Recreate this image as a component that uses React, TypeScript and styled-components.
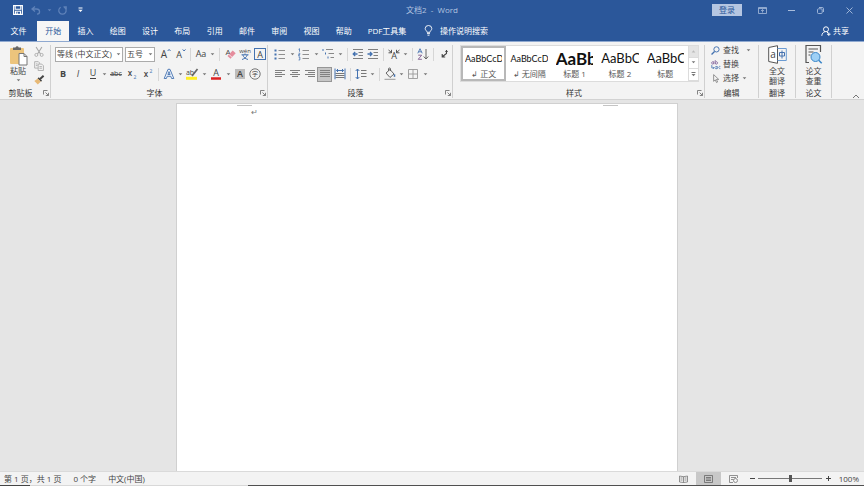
import React from "react";
import styled, { createGlobalStyle, css } from "styled-components";

const BLUE = "#2b579a";
const INK = "#444444";
const ACCENT = "#4472b0";

const GlobalStyle = createGlobalStyle`
  *, *::before, *::after { box-sizing: border-box; }
  html, body, #root { height: 100%; }
  body {
    margin: 0;
    overflow: hidden;
    font: 8px/10px "Open Sans", "Noto Sans CJK SC", sans-serif;
    color: ${INK};
  }
  button, select, input { font: inherit; color: inherit; margin: 0; padding: 0; border: 0; background: none; }
  svg { display: block; flex: none; overflow: visible; }
`;

const Shell = styled.div`
  display: flex;
  flex-direction: column;
  height: 100vh;
  background: #e5e5e5;
`;

/* Title bar */
const TitleBar = styled.header`
  display: grid;
  grid-template-columns: 1fr auto 1fr;
  align-items: center;
  height: 20px;
  background: ${BLUE};
  color: #b4c5e0;
`;
const QuickAccess = styled.div`
  display: flex;
  align-items: center;
  padding-left: 9px;
`;
const QuickButton = styled.button<{ $dim?: boolean; $narrow?: boolean }>`
  display: grid;
  place-items: center;
  width: ${(p) => (p.$narrow ? 8 : 18)}px;
  height: 16px;
  color: ${(p) => (p.$dim ? "#5f82b9" : "#ffffff")};
`;
const QuickGap = styled.span`
  width: 5px;
`;
const DocTitle = styled.h1`
  margin: 0;
  font-size: 8px;
  font-weight: 400;
  white-space: pre;
`;
const WindowControls = styled.div`
  display: flex;
  align-items: center;
  justify-content: flex-end;
`;
const SignIn = styled.button`
  width: 30px;
  height: 12px;
  margin-right: 6px;
  background: #b5c6e2;
  color: ${BLUE};
  line-height: 12px;
`;
const WindowButton = styled.button`
  display: grid;
  place-items: center;
  width: 29px;
  height: 20px;
  color: #a9bddc;
`;

/* Tabs */
const TabBar = styled.nav`
  display: flex;
  height: 21px;
  background: ${BLUE};
  color: #ffffff;
`;
const FileTab = styled.button`
  width: 37px;
`;
const TabList = styled.div`
  display: grid;
  grid-template-columns: repeat(10, 1fr);
  flex: 0 0 323px;
`;
const Tab = styled.button<{ $active?: boolean }>`
  white-space: nowrap;
  ${(p) =>
    p.$active &&
    css`
      background: #f6f6f6;
      color: ${BLUE};
      margin-top: 1px;
    `}
`;
const WideTab = styled(Tab)`
  width: 54px;
`;
const TellMe = styled.button`
  display: flex;
  align-items: center;
  gap: 7px;
  padding-left: 10px;
`;
const Share = styled.button`
  display: flex;
  align-items: center;
  gap: 2px;
  margin-left: auto;
  padding-right: 15px;
`;

/* Ribbon */
const RibbonBar = styled.div`
  display: flex;
  flex: none;
  height: 59px;
  padding-top: 3px;
  background: #f3f3f3;
  border-top: 1px solid #8fa9d0;
  border-bottom: 1px solid #d2d2d2;
`;
const GroupBox = styled.section<{ $width: number }>`
  display: flex;
  flex-direction: column;
  flex: 0 0 ${(p) => p.$width}px;
  min-width: 0;
  height: 53px;
  border-right: 1px solid #d0d0d0;
`;
const GroupBody = styled.div`
  display: flex;
  flex: 1;
  min-height: 0;
`;
const GroupFooter = styled.footer`
  display: flex;
  align-items: center;
  height: 10px;
  text-align: center;
  white-space: nowrap;
  color: #333333;
`;
const GroupName = styled.span`
  flex: 1;
`;
const Launcher = styled.button`
  display: grid;
  place-items: center;
  width: 9px;
  height: 9px;
  color: #777777;
`;
const Rows = styled.div<{ $inset: number }>`
  display: flex;
  flex-direction: column;
  gap: 4px;
  padding: 1px 0 0 ${(p) => p.$inset}px;
`;
const Row = styled.div`
  display: flex;
  align-items: center;
  height: 16px;
`;
const Tool = styled.button<{ $on?: boolean; $wide?: boolean }>`
  display: grid;
  place-items: center;
  width: ${(p) => (p.$wide ? 16 : 15)}px;
  height: 15px;
  white-space: nowrap;
  ${(p) =>
    p.$on &&
    css`
      background: #c6c6c6;
      border: 1px solid #969696;
    `}
`;
const CaretButton = styled.button`
  display: grid;
  place-items: center;
  width: 8px;
  height: 15px;
`;
const Divider = styled.span`
  width: 6px;
  height: 13px;
  background: linear-gradient(#d6d6d6, #d6d6d6) center / 1px 100% no-repeat;
`;
const SelectBox = styled.label<{ $width: number }>`
  display: grid;
  grid-template-columns: 1fr 8px;
  align-items: center;
  width: ${(p) => p.$width}px;
  height: 15px;
  margin-right: 2px;
  background: #ffffff;
  border: 1px solid #ababab;
  svg {
    grid-area: 1 / 2;
    justify-self: center;
    pointer-events: none;
  }
`;
const Select = styled.select`
  grid-area: 1 / 1 / 2 / 3;
  width: 100%;
  height: 13px;
  padding-left: 1px;
  appearance: none;
  white-space: nowrap;
`;

const Paste = styled.button`
  display: flex;
  flex-direction: column;
  align-items: center;
  width: 30px;
  margin-left: 3px;
  padding-bottom: 4px;
`;
const PasteLabel = styled.span`
  margin-bottom: 3px;
`;
const ClipTools = styled.div`
  display: flex;
  flex-direction: column;
  width: 12px;
`;
const ClipTool = styled.button`
  display: grid;
  place-items: center;
  height: 14px;
`;

const Gallery = styled.div`
  display: flex;
  flex: 1;
  min-width: 0;
  height: 37px;
  margin: 0 5px 0 7px;
  background: #ffffff;
  border: 1px solid #dcdcdc;
`;
const StyleCard = styled.button<{ $on?: boolean }>`
  display: flex;
  flex-direction: column;
  flex: 1 1 0;
  min-width: 0;
  padding: 0 2px;
  border: 2px solid ${(p) => (p.$on ? "#b8b8b8" : "transparent")};
`;
const Sample = styled.span<{ $size: number; $bold?: boolean }>`
  width: 100%;
  height: 21px;
  overflow: hidden;
  text-align: left;
  white-space: nowrap;
  font-family: Lato, "Open Sans", sans-serif;
  font-size: ${(p) => p.$size}px;
  font-weight: ${(p) => (p.$bold ? 700 : 400)};
  line-height: 21px;
  color: #111111;
`;
const SampleName = styled.span`
  width: 100%;
  white-space: nowrap;
  text-align: center;
  color: #555555;
`;
const GalleryScroll = styled.div`
  display: grid;
  grid-template-rows: repeat(3, 1fr);
  width: 10px;
  border-left: 1px solid #dcdcdc;
`;
const ScrollButton = styled.button<{ $off?: boolean }>`
  display: grid;
  place-items: center;
  color: ${(p) => (p.$off ? "#bbbbbb" : "#777777")};
  background: ${(p) => (p.$off ? "#e4e4e4" : "#ffffff")};
  border-bottom: 1px solid #dcdcdc;
`;
const EditList = styled.div`
  display: flex;
  flex-direction: column;
  padding-left: 6px;
  margin-top: -2px;
`;
const EditItem = styled.button`
  display: flex;
  align-items: center;
  gap: 3px;
  height: 14px;
  white-space: nowrap;
`;
const EditCaret = styled.span<{ $far?: boolean }>`
  margin-left: ${(p) => (p.$far ? 4 : 0)}px;
`;
const BigTool = styled.button`
  display: flex;
  flex: 1;
  flex-direction: column;
  align-items: center;
  gap: 2px;
  white-space: pre;
`;
const Collapse = styled.button`
  align-self: flex-end;
  margin: 0 4px 0 auto;
  color: #666666;
`;

/* Document */
const Workspace = styled.main`
  display: flex;
  flex: 1;
  min-height: 0;
  justify-content: center;
  padding: 3px 10px 0 0;
`;
const Page = styled.article`
  flex: 0 1 502px;
  padding: 0 59px 0 60px;
  background: #ffffff;
  border: 1px solid #d0d0d0;
  border-bottom: 0;
`;
const Margins = styled.div`
  display: flex;
  justify-content: space-between;
`;
const MarginMark = styled.span`
  width: 15px;
  height: 2px;
  border-bottom: 1px solid #c4c4c4;
`;
const Paragraph = styled.p`
  margin: 1px 0 0 14px;
  color: #777777;
`;

/* Status bar */
const StatusBar = styled.footer`
  display: flex;
  flex: none;
  align-items: center;
  height: 14px;
  padding: 0 5px 0 4px;
  background: #f3f3f3;
  border-top: 1px solid #dadada;
  white-space: nowrap;
`;
const BottomEdge = styled.div`
  flex: none;
  height: 1px;
  background: linear-gradient(to right, #444444 30px, #d8d8d8 30px 248px, #505050 248px);
`;
const StatusItem = styled.span`
  margin-right: 12px;
`;
const ViewButton = styled.button<{ $on?: boolean }>`
  display: grid;
  place-items: center;
  width: 25px;
  height: 13px;
  background: ${(p) => (p.$on ? "#c8c8c8" : "transparent")};
`;
const Views = styled.div`
  display: flex;
  margin-left: auto;
`;
const ZoomButton = styled.button`
  display: grid;
  place-items: center;
  width: 12px;
  height: 12px;
`;
const ZoomSlider = styled.input`
  width: 64px;
  height: 12px;
  appearance: none;
  background: linear-gradient(#777777, #777777) center / 100% 1px no-repeat;
  &::-webkit-slider-thumb {
    appearance: none;
    width: 3px;
    height: 7px;
    background: #555555;
  }
`;
const ZoomValue = styled.button`
  width: 25px;
  text-align: right;
`;

const Caret = ({ color = "#777777" }: { color?: string }) => (
  <svg width="5" height="3" viewBox="0 0 5 3" fill={color}><path d="M.7 .3h3.6L2.5 2.3z" /></svg>
);
const DropCaret = ({ label }: { label: string }) => (
  <CaretButton aria-label={label}><Caret /></CaretButton>
);

const Group = ({ name, width, launcher, children }: { name: string; width: number; launcher?: boolean; children: React.ReactNode }) => (
  <GroupBox $width={width} aria-label={name}>
    <GroupBody>{children}</GroupBody>
    <GroupFooter>
      <GroupName>{name}</GroupName>
      {launcher && (
        <Launcher aria-label={`${name}设置`}>
          <svg width="6" height="6" viewBox="0 0 6 6" fill="none" stroke="currentColor"><path d="M.5 4.5v-4h4M2.5 2.5l3 3M5.5 2.8v2.7H2.8" strokeWidth=".9" /></svg>
        </Launcher>
      )}
    </GroupFooter>
  </GroupBox>
);

const Glyph = ({ children, size = 12 }: { children: React.ReactNode; size?: number }) => (
  <svg width={size} height={size} viewBox="0 0 12 12" fill="none" stroke={INK} strokeWidth="1">{children}</svg>
);
const Letter = ({ x = 6, y = 9, size = 9, weight = 400, fill = INK, children, ...rest }: {
  x?: number; y?: number; size?: number; weight?: number; fill?: string; children: React.ReactNode; fontStyle?: string;
}) => (
  <text x={x} y={y} fontSize={size} fontWeight={weight} fill={fill} stroke="none" textAnchor="middle" {...rest}>{children}</text>
);

const AlignIcon = ({ rows }: { rows: [number, number][] }) => (
  <Glyph>{rows.map(([from, to], i) => <path key={i} d={`M${from} ${2.5 + i * 2}H${to}`} stroke="#808080" />)}</Glyph>
);
const ListIcon = ({ numbered }: { numbered?: boolean }) => (
  <Glyph>
    <path d="M4.5 2.5H11M4.5 6.5H11M4.5 10.5H11" stroke="#909090" />
    {numbered
      ? <path d="M.5 1.3l1-.6v3M.6 5.2h1.2v1.3H.6v1.3h1.4M.6 9h1.2v3H.6" stroke={ACCENT} strokeWidth=".8" />
      : <path d="M.5 2.5h2M.5 6.5h2M.5 10.5h2" stroke={ACCENT} strokeWidth="2" />}
  </Glyph>
);
const IndentIcon = ({ right }: { right?: boolean }) => (
  <Glyph>
    <path d="M1 1.5h10M6.5 4.5H11M6.5 7.5H11M1 10.5h10" stroke="#808080" />
    <path d={right ? "M.5 6h4M3 4l2 2-2 2" : "M5.5 6h-4M3.2 4l-2 2 2 2"} stroke={ACCENT} strokeWidth="1.3" />
  </Glyph>
);

const tabs = ["开始", "插入", "绘图", "设计", "布局", "引用", "邮件", "审阅", "视图", "帮助"];
const styleCards = [
  { name: "↲ 正文", text: "AaBbCcDd", size: 9, on: true },
  { name: "↲ 无间隔", text: "AaBbCcDd", size: 9 },
  { name: "标题 1", text: "AaBb", size: 17, bold: true },
  { name: "标题 2", text: "AaBbC", size: 13 },
  { name: "标题", text: "AaBbC", size: 13 },
];

const Title = () => (
  <TitleBar>
    <QuickAccess>
      <QuickButton aria-label="保存">
        <svg width="10" height="10" viewBox="0 0 10 10" fill="none" stroke="currentColor"><path d="M.6.6h8.8v8.8H.6zM2.2.6v3.6h5.6V.6M2.5 9.4V6.3h5v3.1M4.2 7.2v2" strokeWidth="1.1" /></svg>
      </QuickButton>
      <QuickButton $dim aria-label="撤消">
        <svg width="10" height="9" viewBox="0 0 10 9" fill="none" stroke="currentColor"><path d="M4 .5L1 3l3 2.6M1.3 3h4.2c4 0 4 5 .5 5.2" strokeWidth="1.3" /></svg>
      </QuickButton>
      <QuickButton $dim $narrow aria-label="撤消选项"><Caret color="currentColor" /></QuickButton>
      <QuickButton $dim aria-label="重复">
        <svg width="9" height="9" viewBox="0 0 9 9" fill="none" stroke="currentColor"><path d="M6.2 1.2A3.7 3.7 0 1 1 2.7 1.2M5.5.8h2.7v2.7" strokeWidth="1.2" /></svg>
      </QuickButton>
      <QuickGap />
      <QuickButton $narrow aria-label="自定义快速访问工具栏">
        <svg width="5" height="6" viewBox="0 0 5 6" fill="currentColor"><path d="M.5.5h4v1h-4zM.3 2.8h4.4L2.5 5z" /></svg>
      </QuickButton>
    </QuickAccess>
    <DocTitle>文档2  -  Word</DocTitle>
    <WindowControls>
      <SignIn>登录</SignIn>
      <WindowButton aria-label="功能区显示选项">
        <svg width="9" height="7" viewBox="0 0 9 7" fill="none" stroke="currentColor"><path d="M.5.5h8v6h-8zM.5 1.5h8M4.5 5.5V2.8M3 4l1.5-1.4L6 4" strokeWidth=".8" /></svg>
      </WindowButton>
      <WindowButton aria-label="最小化"><svg width="7" height="1" viewBox="0 0 7 1"><path d="M0 .5h7" stroke="currentColor" /></svg></WindowButton>
      <WindowButton aria-label="向下还原">
        <svg width="7" height="7" viewBox="0 0 7 7" fill="none" stroke="currentColor" strokeWidth=".9"><rect x=".5" y="1.8" width="4.7" height="4.7" rx="1" /><path d="M2 .5h3.2q1.3 0 1.3 1.3V5" /></svg>
      </WindowButton>
      <WindowButton aria-label="关闭"><svg width="7" height="7" viewBox="0 0 7 7" stroke="currentColor"><path d="M.5.5l6 6M6.5.5l-6 6" strokeWidth=".9" /></svg></WindowButton>
    </WindowControls>
  </TitleBar>
);

const Tabs = () => (
  <TabBar>
    <FileTab>文件</FileTab>
    <TabList>{tabs.map((name, i) => <Tab key={name} $active={i === 0}>{name}</Tab>)}</TabList>
    <WideTab>PDF工具集</WideTab>
    <TellMe>
      <svg width="9" height="11" viewBox="0 0 9 11" fill="none" stroke="currentColor"><path d="M3 7.3C3 5.8 1.2 5.3 1.2 3.6a3.3 3.1 0 0 1 6.6 0C7.8 5.3 6 5.8 6 7.3zM3 8.6h3M3.5 10.2h2" strokeWidth=".9" /></svg>
      操作说明搜索
    </TellMe>
    <Share>
      <svg width="10" height="10" viewBox="0 0 10 10" fill="none" stroke="currentColor"><circle cx="5" cy="3.3" r="2.5" /><path d="M.8 9.8c.2-2.3 1.4-3.6 3-4M6 6l1 1M6 8.2h3.5M7.8 6.5v3.4" /></svg>
      共享
    </Share>
  </TabBar>
);

const Clipboard = () => (
  <Group name="剪贴板" width={51} launcher>
    <Paste>
      <svg width="19" height="21" viewBox="0 0 19 21"><rect x="1" y="3" width="14" height="16" rx="1" fill="#ecc47c" /><path d="M4 5V2.5h2.5a1.7 1.7 0 0 1 3.2 0H12V5z" fill="#666666" /><path d="M10 8.5h5l3 3V20h-8z" fill="#ffffff" stroke="#777777" /><path d="M15 8.5v3h3" fill="none" stroke="#777777" /></svg>
      <PasteLabel>粘贴</PasteLabel>
      <Caret />
    </Paste>
    <ClipTools>
      <ClipTool aria-label="剪切"><Glyph size={10}><path d="M2.5 0l5.3 8.3M9.5 0L4.2 8.3" stroke="#a6a6a6" strokeWidth="1.3" /><circle cx="2.8" cy="9.5" r="1.8" stroke="#a6a6a6" /><circle cx="9.2" cy="9.5" r="1.8" stroke="#a6a6a6" /></Glyph></ClipTool>
      <ClipTool aria-label="复制"><Glyph size={10}><path d="M5 8.5H.8V.8h4.4l1.5 1.5v1M5 3.7h4.3l2 2v5.7H5zM6.5 6.7h3M6.5 8.7h3M2.3 3.5h2M2.3 5.5h2" stroke="#a6a6a6" /></Glyph></ClipTool>
      <ClipTool aria-label="格式刷"><Glyph size={10}><path d="M11.5.8L7.3 4.7" strokeWidth="2.4" /><path d="M5 3.5l4 4" strokeWidth="2" /><path d="M4.6 4.3L.4 7.2l4.2 4.3L8 8z" fill="#e7b976" stroke="none" /></Glyph></ClipTool>
    </ClipTools>
  </Group>
);

const FontGroup = () => (
  <Group name="字体" width={217} launcher>
    <Rows $inset={4}>
      <Row>
        <SelectBox $width={68}><Select aria-label="字体" defaultValue="等线 (中文正文)"><option>等线 (中文正文)</option></Select><Caret /></SelectBox>
        <SelectBox $width={30}><Select aria-label="字号" defaultValue="五号"><option>五号</option></Select><Caret /></SelectBox>
        <Tool aria-label="增大字号"><Glyph><Letter x={5} y={10} size={10}>A</Letter><path d="M8.7 3l1.4-1.6L11.5 3" stroke={ACCENT} /></Glyph></Tool>
        <Tool aria-label="减小字号"><Glyph><Letter x={5} y={10} size={9}>A</Letter><path d="M8.7 1.4L10.1 3l1.4-1.6" stroke={ACCENT} /></Glyph></Tool>
        <Divider />
        <Tool aria-label="更改大小写"><Glyph><Letter>Aa</Letter></Glyph></Tool>
        <DropCaret label="大小写选项" />
        <Divider />
        <Tool aria-label="清除所有格式"><Glyph><Letter x={4} y={7} size={8}>A</Letter><path d="M8.7 2.5l3 2.7-5.2 5.6-3-2.8z" fill="#e58c9c" stroke="none" /><path d="M5 6.5l3 2.7" stroke="#ffffff" strokeWidth=".7" /></Glyph></Tool>
        <Tool aria-label="拼音指南"><Glyph><Letter y={5} size={6}>wén</Letter><path d="M2.5 6.8h7M6 5.5v1.3M8.3 6.8C7.5 9.3 5.7 10.7 3 11.5M3.8 6.8c.7 2.5 2.5 4 5.2 4.7" stroke={ACCENT} /></Glyph></Tool>
        <Tool aria-label="字符边框"><Glyph><rect x=".5" y=".5" width="11" height="11" stroke={ACCENT} /><Letter y={9.5}>A</Letter></Glyph></Tool>
      </Row>
      <Row>
        <Tool aria-label="加粗"><Glyph><Letter weight={700}>B</Letter></Glyph></Tool>
        <Tool aria-label="倾斜"><Glyph><Letter fontStyle="italic">I</Letter></Glyph></Tool>
        <Tool aria-label="下划线"><Glyph><Letter y={8}>U</Letter><path d="M3 10.5h6" /></Glyph></Tool>
        <DropCaret label="下划线选项" />
        <Tool $wide aria-label="删除线"><Glyph><Letter y={8} size={7}>abc</Letter><path d="M0 6.5h12" strokeWidth=".8" /></Glyph></Tool>
        <Tool $wide aria-label="下标"><Glyph><Letter x={4} y={8} size={8} weight={600}>x</Letter><Letter x={9} y={11} size={5} fill={ACCENT}>2</Letter></Glyph></Tool>
        <Tool aria-label="上标"><Glyph><Letter x={4} y={9} size={8} weight={600}>x</Letter><Letter x={9} y={5} size={5} fill={ACCENT}>2</Letter></Glyph></Tool>
        <Divider />
        <Tool aria-label="文本效果"><Glyph><path d="M1.2 10.5L5 1.3h2l3.8 9.2H8.6L7.8 8.3H4.2l-.8 2.2zM4.9 6.5h2.2L6 3.6z" stroke={ACCENT} strokeWidth=".9" fill="#eef4fc" /></Glyph></Tool>
        <DropCaret label="文本效果选项" />
        <Tool $wide aria-label="突出显示"><Glyph><path d="M0 10.3h11" stroke="#ffee22" strokeWidth="3" /><Letter x={4} y={7} size={7}>ab</Letter><path d="M11.5 1L6 8" strokeWidth="1.7" stroke="#666666" /></Glyph></Tool>
        <DropCaret label="突出显示颜色" />
        <Tool $wide aria-label="字体颜色"><Glyph><Letter y={8} size={9}>A</Letter><path d="M1 10.5h10" stroke="#dd2222" strokeWidth="2.5" /></Glyph></Tool>
        <DropCaret label="字体颜色选项" />
        <Tool aria-label="字符底纹"><Glyph><path d="M1 1h10v10H1z" fill="#bdbdbd" stroke="none" /><Letter weight={600}>A</Letter></Glyph></Tool>
        <Tool aria-label="带圈字符"><Glyph><circle cx="6" cy="6" r="5.2" stroke="#777777" /><Letter y={8.3} size={6}>字</Letter></Glyph></Tool>
      </Row>
    </Rows>
  </Group>
);

const ParagraphGroup = () => (
  <Group name="段落" width={185} launcher>
    <Rows $inset={4}>
      <Row>
        <Tool $wide aria-label="项目符号"><ListIcon /></Tool><DropCaret label="项目符号库" />
        <Tool $wide aria-label="编号"><ListIcon numbered /></Tool><DropCaret label="编号库" />
        <Tool $wide aria-label="多级列表"><Glyph><path d="M4 1.5h7M6.5 5.5H12M8.5 9.5H12" stroke="#888888" /><path d="M1 1v2M3.5 4.5v2M6 8.5v2" stroke={ACCENT} /></Glyph></Tool><DropCaret label="多级列表库" />
        <Divider />
        <Tool aria-label="减少缩进量"><IndentIcon /></Tool>
        <Tool aria-label="增加缩进量"><IndentIcon right /></Tool>
        <Divider />
        <Tool aria-label="中文版式"><Glyph><path d="M.5 2l3 2.5M11.5 2l-3 2.5M.5 4.8h3V1.8M11.5 4.8h-3V1.8" strokeWidth=".9" /><Letter y={10.5}>A</Letter></Glyph></Tool><DropCaret label="中文版式选项" />
        <Divider />
        <Tool aria-label="排序"><Glyph><path d="M.8 5.3L3 .7l2.2 4.6M1.6 3.8h2.8" stroke={ACCENT} strokeWidth=".9" /><path d="M1.2 7.2h3.5L1.2 11.3h3.7" stroke="#805a90" strokeWidth=".9" /><path d="M9 1v10M6.7 8.5L9 11l2.3-2.5" stroke="#666666" /></Glyph></Tool>
        <Divider />
        <Tool aria-label="显示编辑标记"><Glyph><path d="M8.5 2v3.5L4 9M4.2 6v3h3" strokeWidth="1.1" /><path d="M7.3 3.5h2.4" /></Glyph></Tool>
      </Row>
      <Row>
        <Tool aria-label="左对齐"><AlignIcon rows={[[1, 11], [1, 8], [1, 11], [1, 8]]} /></Tool>
        <Tool aria-label="居中"><AlignIcon rows={[[1, 11], [3, 9], [1, 11], [3, 9]]} /></Tool>
        <Tool aria-label="右对齐"><AlignIcon rows={[[1, 11], [4, 11], [1, 11], [4, 11]]} /></Tool>
        <Tool $on aria-label="两端对齐" aria-pressed><AlignIcon rows={[[1, 11], [1, 11], [1, 11], [1, 11]]} /></Tool>
        <Tool aria-label="分散对齐"><Glyph><path d="M1.5 5.5h9M1.5 7.5h9M1.5 9.5h9" stroke="#777777" /><path d="M1 .5v10.8M11 .5v10.8M2.5 2.5h7M4 1L2.5 2.5 4 4M8 1l1.5 1.5L8 4" stroke={ACCENT} /></Glyph></Tool>
        <Divider />
        <Tool aria-label="行距"><Glyph><path d="M6 2.5h5.5M6 5.5h5.5M6 8.5h5.5" stroke="#777777" /><path d="M2.5 1v10M.7 3l1.8-2 1.8 2M.7 9l1.8 2 1.8-2" stroke={ACCENT} /></Glyph></Tool><DropCaret label="行距选项" />
        <Divider />
        <Tool aria-label="底纹"><Glyph><path d="M2 5l4-3.5L10 6 6 9.5zM4.5 3V1a1 1 0 0 1 2 0v2" stroke="#666666" /><path d="M10.5 6.3v2.5" stroke={ACCENT} strokeWidth="1.5" /><path d="M.5 11.3h11" stroke="#999999" /></Glyph></Tool><DropCaret label="底纹颜色" />
        <Tool $wide aria-label="边框"><Glyph><path d="M1.5 1.5h9v9h-9zM6 1.5v9M1.5 6h9" stroke="#999999" strokeWidth=".9" /></Glyph></Tool><DropCaret label="边框选项" />
      </Row>
    </Rows>
  </Group>
);

const StylesGroup = () => (
  <Group name="样式" width={252} launcher>
    <Gallery>
      {styleCards.map((s) => (
        <StyleCard key={s.name} $on={s.on}>
          <Sample $size={s.size} $bold={s.bold}>{s.text}</Sample>
          <SampleName>{s.name}</SampleName>
        </StyleCard>
      ))}
      <GalleryScroll>
        <ScrollButton $off aria-label="上一行"><svg width="5" height="3" viewBox="0 0 5 3" fill="currentColor"><path d="M.7 2.5h3.6L2.5.3z" /></svg></ScrollButton>
        <ScrollButton aria-label="下一行"><Caret /></ScrollButton>
        <ScrollButton aria-label="其他样式"><svg width="5" height="5" viewBox="0 0 5 5" fill="currentColor"><path d="M.5 0h4v1h-4zM.5 2h4l-2 2.3z" /></svg></ScrollButton>
      </GalleryScroll>
    </Gallery>
  </Group>
);

const EditGroup = () => (
  <Group name="编辑" width={54}>
    <EditList>
      <EditItem><Glyph size={9}><circle cx="7.3" cy="4.5" r="3.5" stroke={ACCENT} strokeWidth="1.3" /><path d="M4.7 7.3L.7 11.3" stroke={ACCENT} strokeWidth="1.8" /></Glyph>查找<EditCaret $far><Caret /></EditCaret></EditItem>
      <EditItem>
        <Glyph size={9}>
          <path d="M3.7 1.5v4M3.7 3.5a1.5 1.5 0 1 0 0 .8M5.7 0v5.5M5.7 3.5a1.6 1.6 0 1 1 0 .8" stroke="#80609a" />
          <path d="M8.2 8v4M8.2 10a1.5 1.5 0 1 0 0 .5M12.5 8.5c-2.8-.8-2.8 3.6 0 3M1 6.5v4h2.8M2.5 9l1.4 1.5L2.5 12" stroke={ACCENT} />
        </Glyph>
        替换
      </EditItem>
      <EditItem><Glyph size={9}><path d="M3.5.8v9l2.2-2 1.6 3.6 1.5-.7-1.5-3.5h3z" stroke="#777777" /></Glyph>选择<EditCaret><Caret /></EditCaret></EditItem>
    </EditList>
  </Group>
);

const Ribbon = () => (
  <RibbonBar>
    <Clipboard />
    <FontGroup />
    <ParagraphGroup />
    <StylesGroup />
    <EditGroup />
    <Group name="翻译" width={37}>
      <BigTool>
        <svg width="19" height="19" viewBox="0 0 19 19" fill="none"><path d="M.7 2.5L9.5.7v17.6L.7 16.5z" stroke="#555555" fill="#ffffff" /><path d="M9.5 3.5h8.8v12H9.5" stroke="#6b9bd2" /><Letter x={5} y={12.5} size={10}>a</Letter><path d="M11.5 7.5h5v3.5h-5zM14 5.5v8" stroke={ACCENT} /></svg>
        {"全文\n翻译"}
      </BigTool>
    </Group>
    <Group name="论文" width={36}>
      <BigTool>
        <svg width="19" height="19" viewBox="0 0 19 19" fill="none"><path d="M5 17.5H2v-17h14.5V7M4.5 4h9.5M4.5 7h5M4.5 10h2" stroke="#555555" strokeWidth="1.2" /><circle cx="11.5" cy="12" r="4.5" fill="#9ed0f5" stroke="#3a86c8" /><path d="M14.7 15.3l3 3" stroke="#3a86c8" strokeWidth="1.6" /></svg>
        {"论文\n查重"}
      </BigTool>
    </Group>
    <Collapse aria-label="折叠功能区"><svg width="8" height="5" viewBox="0 0 8 5" fill="none" stroke="currentColor"><path d="M1 4l3-3 3 3" strokeWidth=".9" /></svg></Collapse>
  </RibbonBar>
);

const Status = () => (
  <StatusBar>
    <StatusItem>第 1 页，共 1 页</StatusItem>
    <StatusItem>0 个字</StatusItem>
    <StatusItem>中文(中国)</StatusItem>
    <Views>
      <ViewButton aria-label="阅读视图"><svg width="9" height="8" viewBox="0 0 9 8" fill="none" stroke="#777777"><path d="M.5 1l4 .7 4-.7v6l-4 .5-4-.5zM4.5 1.7v6M1.5 3h2M1.5 5h2M5.5 3h2M5.5 5h2" strokeWidth=".8" /></svg></ViewButton>
      <ViewButton $on aria-label="页面视图" aria-pressed><svg width="9" height="8" viewBox="0 0 9 8" fill="none" stroke="#666666"><path d="M.5.5h8v7h-8zM2 2.5h5M2 4h5M2 5.5h5" strokeWidth=".8" /></svg></ViewButton>
      <ViewButton aria-label="Web 版式视图"><svg width="9" height="8" viewBox="0 0 9 8" fill="none" stroke="#777777"><path d="M4 7.5H.5v-7h8V3M2 2.5h5M2 4.5h2.5" strokeWidth=".8" /><circle cx="6.5" cy="5.5" r="2" strokeWidth=".8" /></svg></ViewButton>
    </Views>
    <ZoomButton aria-label="缩小"><svg width="5" height="5" viewBox="0 0 5 5"><path d="M0 2.5h5" stroke={INK} /></svg></ZoomButton>
    <ZoomSlider type="range" aria-label="显示比例" min={0} max={200} defaultValue={100} />
    <ZoomButton aria-label="放大"><svg width="5" height="5" viewBox="0 0 5 5"><path d="M0 2.5h5M2.5 0v5" stroke={INK} /></svg></ZoomButton>
    <ZoomValue>100%</ZoomValue>
  </StatusBar>
);

export default function App() {
  return (
    <Shell>
      <GlobalStyle />
      <Title />
      <Tabs />
      <Ribbon />
      <Workspace>
        <Page>
          <Margins><MarginMark /><MarginMark /></Margins>
          <Paragraph>↵</Paragraph>
        </Page>
      </Workspace>
      <Status />
      <BottomEdge />
    </Shell>
  );
}
